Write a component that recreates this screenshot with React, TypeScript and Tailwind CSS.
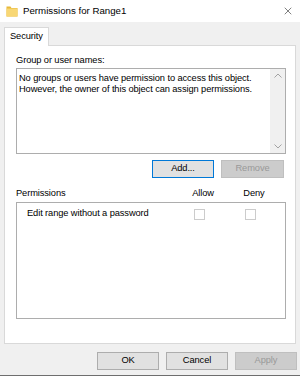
import { X } from 'lucide-react';

function Btn({ label, w, focused, disabled }: { label: string; w: string; focused?: boolean; disabled?: boolean }) {
  const cls = disabled
    ? 'bg-[#cccccc] border-[#bfbfbf] text-[#999999]'
    : focused
      ? 'bg-[#e1e1e1] border-[#0078d7] text-black'
      : 'bg-[#e1e1e1] border-[#adadad] text-black';
  return (
    <div className={`${w} h-[18px] border flex items-center justify-center leading-none ${cls}`}>
      {label}
    </div>
  );
}

function Folder() {
  return (
    <svg width="12" height="12" viewBox="0 0 12 12" className="shrink-0">
      <path d="M0.5 1.5h4l1 1.5h6v8.5h-11z" fill="#e8b93a" />
      <path d="M0.5 3.5h11v8h-11z" fill="#f8d775" />
    </svg>
  );
}

function Checkbox() {
  return <div className="w-[11px] h-[11px] border border-[#cccccc] bg-white" />;
}

export default function App() {
  return (
    <div className="w-[300px] h-[376px] bg-[#f0f0f0] flex flex-col font-['Liberation_Sans',Arial,sans-serif] text-[9.3px] tracking-[-0.1px] whitespace-nowrap text-black border-b border-[#6e6e6e] overflow-hidden">
      {/* title bar */}
      <div className="h-[22px] bg-white flex items-center pl-[6px] pr-[6px] shrink-0">
        <Folder />
        <span className="ml-[5px] text-[9.7px] tracking-normal text-black">Permissions for Range1</span>
        <X size={12} strokeWidth={1} className="ml-auto text-black" />
      </div>

      {/* tab */}
      <div className="pl-[4px] mt-[5px]">
        <div className="relative z-10 w-[45px] h-[19px] bg-white border border-[#d9d9d9] border-b-0 flex items-center pl-[5px] -mb-px">
          Security
        </div>
      </div>

      {/* tab panel */}
      <div className="ml-[4px] w-[292px] h-[299px] bg-white border border-[#d9d9d9] pl-[11px] pr-[9px] flex flex-col">
        <div className="mt-[8px] h-[12px] leading-[12px]">Group or user names:</div>
        <div className="mt-[2px] h-[86px] border border-[#adadad] flex">
          <div className="flex-1 pl-[2px] pt-[4px] leading-[11px]">
            <div>No groups or users have permission to access this object.</div>
            <div>However, the owner of this object can assign permissions.</div>
          </div>
          <div className="w-[15px] bg-[#f0f0f0] flex flex-col items-center justify-between py-[4px] text-[#a3a3a3]">
            <svg width="8" height="5" viewBox="0 0 8 5"><path d="M0.5 4.5L4 1l3.5 3.5" fill="none" stroke="currentColor" /></svg>
            <svg width="8" height="5" viewBox="0 0 8 5"><path d="M0.5 0.5L4 4l3.5-3.5" fill="none" stroke="currentColor" /></svg>
          </div>
        </div>
        <div className="mt-[6px] flex justify-end gap-[7px] pr-[2px]">
          <Btn label="Add..." w="w-[62px]" focused />
          <Btn label="Remove" w="w-[63px]" disabled />
        </div>
        <div className="mt-[9px] h-[12px] leading-[12px] flex">
          <div className="flex-1">Permissions</div>
          <div className="w-[40px] text-center">Allow</div>
          <div className="w-[11px]" />
          <div className="w-[40px] text-center">Deny</div>
          <div className="w-[12px]" />
        </div>
        <div className="mt-[3px] h-[117px] border border-[#adadad]">
          <div className="flex items-center h-[14px] mt-[4px]">
            <div className="flex-1 pl-[10px]">Edit range without a password</div>
            <div className="w-[40px] flex justify-center"><Checkbox /></div>
            <div className="w-[11px]" />
            <div className="w-[40px] flex justify-center"><Checkbox /></div>
            <div className="w-[15px]" />
          </div>
        </div>
      </div>

      {/* dialog buttons */}
      <div className="mt-[8px] flex justify-end gap-[7px] pr-[3px]">
        <Btn label="OK" w="w-[62px]" />
        <Btn label="Cancel" w="w-[62px]" />
        <Btn label="Apply" w="w-[62px]" disabled />
      </div>
    </div>
  );
}
